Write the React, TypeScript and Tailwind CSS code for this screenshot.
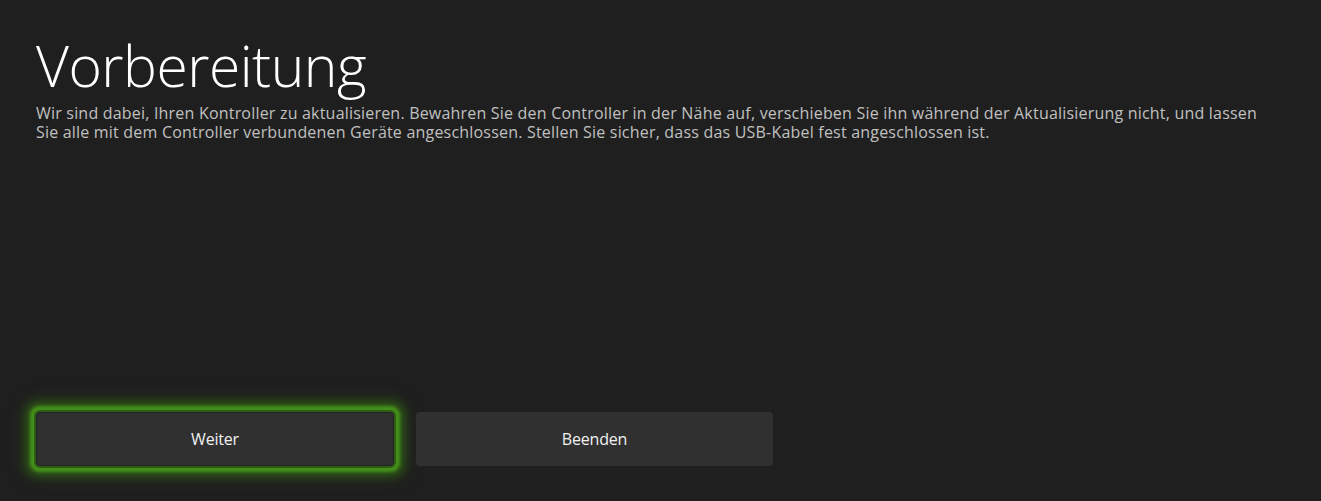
export default function App() {
  return (
    <div className="flex h-[501px] w-full flex-col bg-[#1f1f1f] px-[36px] font-['Segoe_UI','Open_Sans','Noto_Sans',sans-serif]">
      <h1 className="mt-[30px] text-[57px] font-light leading-[70px] tracking-[-0.5px] text-white">Vorbereitung</h1>
      <p className="mt-[4px] max-w-[1232px] text-[16px] leading-[19px] tracking-[0.2px] text-[#c0c0c0]">
        Wir sind dabei, Ihren Kontroller zu aktualisieren. Bewahren Sie den Controller in der Nähe auf, verschieben Sie ihn während der Aktualisierung nicht, und lassen Sie alle mit dem Controller verbundenen Geräte angeschlossen. Stellen Sie sicher, dass das USB-Kabel fest angeschlossen ist.
      </p>
      <div className="mt-auto mb-[35px] flex gap-[22px]">
        <button className="h-[54px] w-[358px] rounded-[4px] border border-[#222] bg-[#303030] text-[16px] tracking-[-0.2px] text-[#f0f0f0] shadow-[0_0_0_2px_#2e5e16,0_0_3px_6px_#45901a,0_0_8px_10px_rgba(60,130,20,0.5),0_0_16px_13px_rgba(50,110,15,0.25)]">
          Weiter
        </button>
        <button className="h-[54px] w-[357px] rounded-[4px] bg-[#303030] text-[16px] tracking-[-0.2px] text-[#f0f0f0]">
          Beenden
        </button>
      </div>
    </div>
  )
}
